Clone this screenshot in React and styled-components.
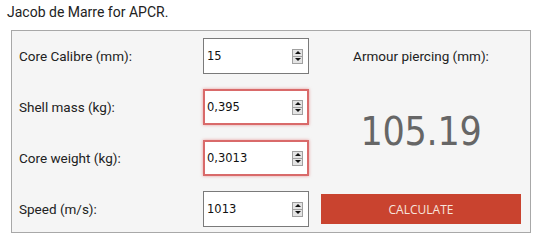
import React, { useState } from 'react';
import styled, { createGlobalStyle, css } from 'styled-components';

const GlobalStyle = createGlobalStyle`
  html, body {
    margin: 0;
    padding: 0;
    background: #ffffff;
  }
  body {
    font-family: Roboto, "Liberation Sans", Arial, sans-serif;
  }
`;

const Page = styled.div`
  padding: 2px 0 0 0;
`;

const Title = styled.div`
  padding: 0 7px;
  font-size: 14px;
  line-height: 20px;
  color: #222;
`;

const Panel = styled.div`
  margin: 8px 0 0 11px;
  width: 511px;
  height: 194px;
  border: 1px solid #a8a8a8;
  background: #f5f5f5;
  display: grid;
  grid-template-columns: 172px 106px 200px;
  grid-template-rows: repeat(4, 36px);
  column-gap: 12px;
  row-gap: 15px;
  padding: 7px 0 0 7px;
  box-sizing: content-box;
  align-items: center;
`;

const Label = styled.div`
  font-size: 13.5px;
  color: #222;
  grid-column: 1;
`;

const Field = styled.div`
  grid-column: 2;
  height: 36px;
  box-sizing: border-box;
  display: flex;
  align-items: center;
  background: #fff;
  border: 1px solid #7a7a7a;
  padding: 0 5px 0 3px;
  ${(p) =>
    p.$invalid &&
    css`
      border: 2px solid #d96a6a;
      box-shadow: 0 0 3px rgba(220, 80, 80, 0.55);
      padding: 0 4px 0 2px;
    `}
`;

const Input = styled.input`
  flex: 1;
  min-width: 0;
  border: 0;
  outline: none;
  background: transparent;
  font-family: "DejaVu Sans", Verdana, sans-serif;
  font-size: 11.5px;
  color: #111;
  padding: 0;
`;

const Spinner = styled.div`
  width: 11px;
  height: 15px;
  display: flex;
  flex-direction: column;
  border: 1px solid #a0a0a0;
  box-sizing: border-box;
  background: #e4e4e4;
`;

const SpinHalf = styled.div`
  flex: 1;
  display: flex;
  align-items: center;
  justify-content: center;
  & + & {
    border-top: 1px solid #a0a0a0;
  }
`;

const Arrow = styled.div`
  width: 0;
  height: 0;
  border-left: 3px solid transparent;
  border-right: 3px solid transparent;
  ${(p) =>
    p.$down
      ? css`border-top: 3px solid #111;`
      : css`border-bottom: 3px solid #111;`}
`;

const ResultLabel = styled.div`
  grid-column: 3;
  grid-row: 1;
  text-align: center;
  font-size: 13.5px;
  color: #222;
`;

const ResultValue = styled.div`
  grid-column: 3;
  grid-row: 2 / span 2;
  text-align: center;
  font-family: "DejaVu Sans", Verdana, sans-serif;
  font-stretch: condensed;
  font-size: 39px;
  color: #666;
  letter-spacing: -0.3px;
  padding-bottom: 3px;
`;

const Button = styled.button`
  grid-column: 3;
  grid-row: 4;
  height: 30px;
  border: 0;
  background: #c9432f;
  color: #f7e4dd;
  font-family: "Open Sans", "Liberation Sans", sans-serif;
  font-size: 12px;
  cursor: pointer;
  padding: 0;
`;

const fields = [
  { label: 'Core Calibre (mm):', value: '15' },
  { label: 'Shell mass (kg):', value: '0,395', invalid: true },
  { label: 'Core weight (kg):', value: '0,3013', invalid: true },
  { label: 'Speed (m/s):', value: '1013' },
];

const NumberField = ({ value, invalid, row }) => {
  const [v, setV] = useState(value);
  return (
    <Field $invalid={invalid} style={{ gridRow: row }}>
      <Input value={v} onChange={(e) => setV(e.target.value)} />
      <Spinner>
        <SpinHalf><Arrow /></SpinHalf>
        <SpinHalf><Arrow $down /></SpinHalf>
      </Spinner>
    </Field>
  );
};

export default function App() {
  return (
    <Page>
      <GlobalStyle />
      <Title>Jacob de Marre for APCR.</Title>
      <Panel>
        {fields.map((f, i) => (
          <React.Fragment key={f.label}>
            <Label style={{ gridRow: i + 1 }}>{f.label}</Label>
            <NumberField value={f.value} invalid={f.invalid} row={i + 1} />
          </React.Fragment>
        ))}
        <ResultLabel>Armour piercing (mm):</ResultLabel>
        <ResultValue>105.19</ResultValue>
        <Button>CALCULATE</Button>
      </Panel>
    </Page>
  );
}
